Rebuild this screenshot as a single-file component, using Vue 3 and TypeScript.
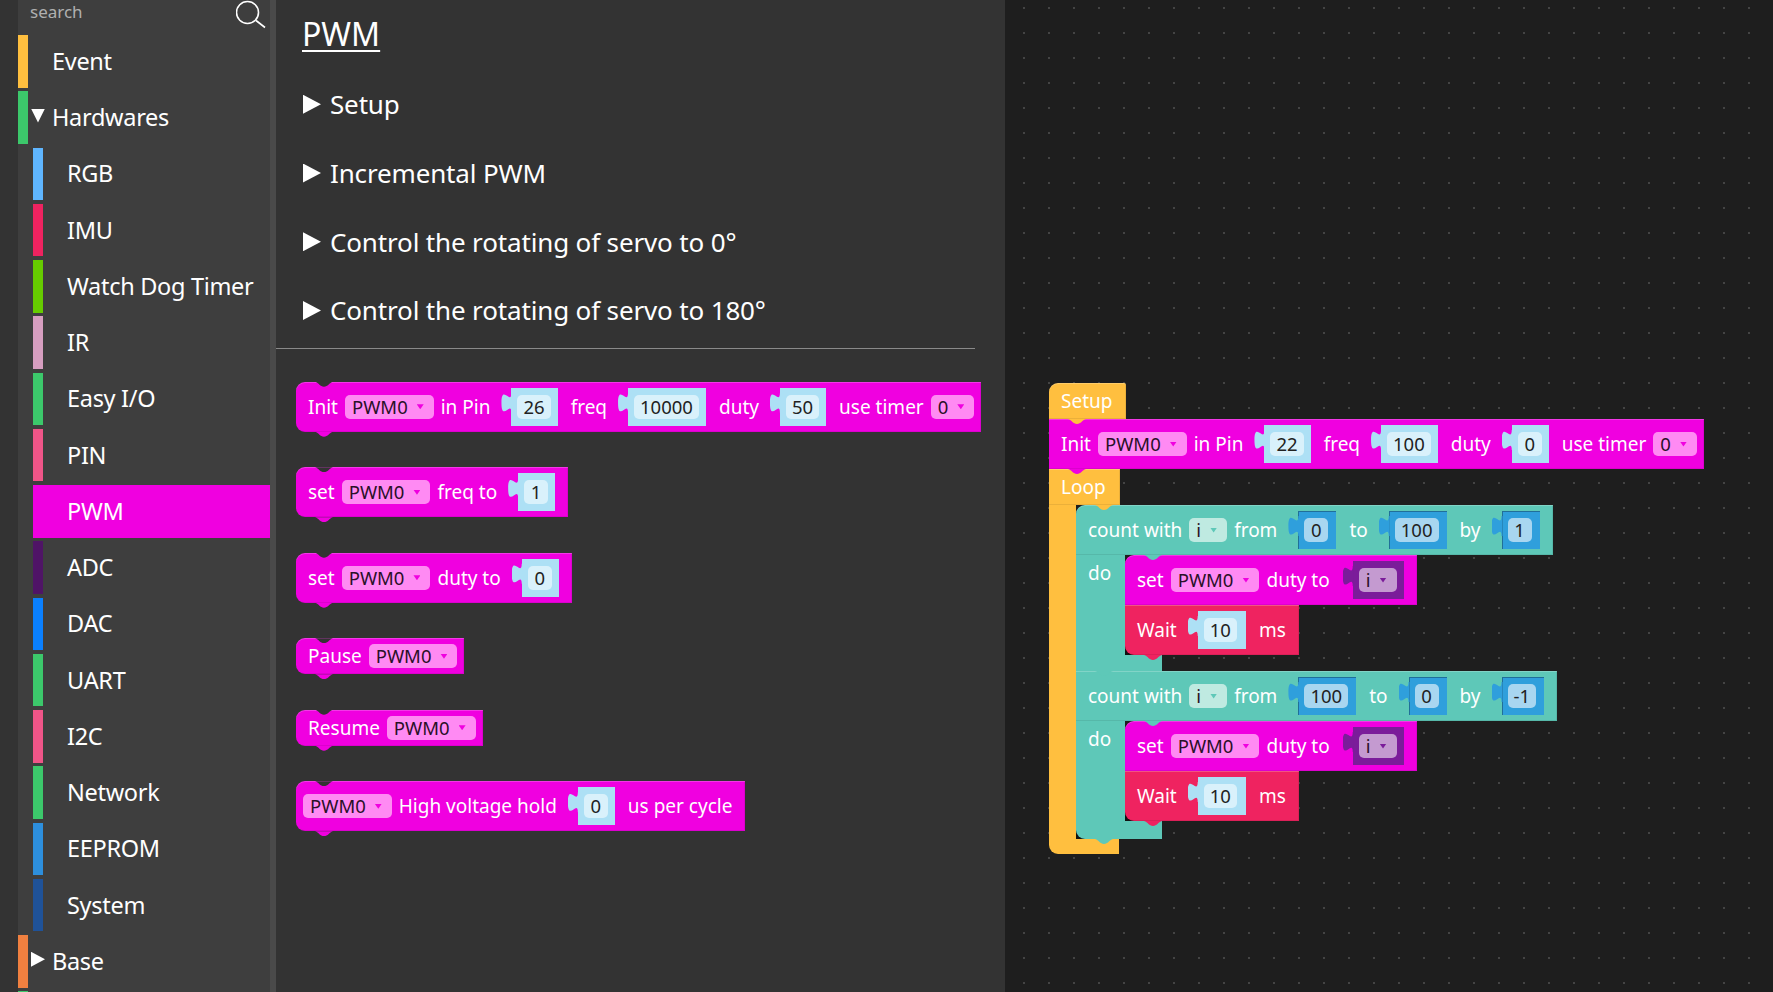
<script setup lang="ts">
type Part = { kind: "txt" | "dd" | "num" | "var"; v: string; tone?: string };

const t = (v: string): Part => ({ kind: "txt", v });
const dd = (v: string): Part => ({ kind: "dd", v });
const num = (v: string, tone = ""): Part => ({ kind: "num", v, tone });
const iVar = (): Part => ({ kind: "var", v: "i", tone: "purple" });

const toolbox = [
  { label: "Event", color: "#ffbf3f", sub: false },
  { label: "Hardwares", color: "#3cc86b", sub: false, caret: "down" },
  { label: "RGB", color: "#5fb6ff", sub: true },
  { label: "IMU", color: "#ef2360", sub: true },
  { label: "Watch Dog Timer", color: "#66cc00", sub: true },
  { label: "IR", color: "#d69ec0", sub: true },
  { label: "Easy I/O", color: "#3cc86b", sub: true },
  { label: "PIN", color: "#ef5588", sub: true },
  { label: "PWM", color: "#f000e0", sub: true, active: true },
  { label: "ADC", color: "#4f1466", sub: true },
  { label: "DAC", color: "#0a80ff", sub: true },
  { label: "UART", color: "#3cc86b", sub: true },
  { label: "I2C", color: "#ef5588", sub: true },
  { label: "Network", color: "#3cc86b", sub: true },
  { label: "EEPROM", color: "#2d8fdd", sub: true },
  { label: "System", color: "#1f5298", sub: true },
  { label: "Base", color: "#f08040", sub: false, caret: "right" },
  { label: "", color: "#3cc86b", sub: false },
];

const examples = [
  "Setup",
  "Incremental PWM",
  "Control the rotating of servo to 0°",
  "Control the rotating of servo to 180°",
];

const flyout: Part[][] = [
  [t("Init"), dd("PWM0"), t("in Pin"), num("26"), t("freq"), num("10000"), t("duty"), num("50"), t("use timer"), dd("0")],
  [t("set"), dd("PWM0"), t("freq to"), num("1")],
  [t("set"), dd("PWM0"), t("duty to"), num("0")],
  [t("Pause"), dd("PWM0")],
  [t("Resume"), dd("PWM0")],
  [dd("PWM0"), t("High voltage hold"), num("0"), t("us per cycle")],
];

const initRow = [t("Init"), dd("PWM0"), t("in Pin"), num("22"), t("freq"), num("100"), t("duty"), num("0"), t("use timer"), dd("0")];

const body = [
  { cls: "mag notch rt", parts: [t("set"), dd("PWM0"), t("duty to"), iVar()] },
  { cls: "red rb bump", parts: [t("Wait"), num("10"), t("ms")] },
];

const loops = [
  {
    cls: "notch rt",
    head: [t("count with"), dd("i"), t("from"), num("0", "blue"), t("to"), num("100", "blue"), t("by"), num("1", "blue")],
  },
  {
    cls: "",
    head: [t("count with"), dd("i"), t("from"), num("100", "blue"), t("to"), num("0", "blue"), t("by"), num("-1", "blue")],
  },
];
</script>

<template>
  <div class="app">
    <aside class="toolbox">
      <div class="search">
        <span class="search-text">search</span>
        <svg class="search-icon" width="30" height="30" viewBox="0 0 30 30" fill="none" stroke="#fff" stroke-width="1.6">
          <circle cx="11.5" cy="12.5" r="11" />
          <path d="M20 20.5 29 27.5" />
        </svg>
      </div>
      <div
        v-for="item in toolbox"
        :key="item.label"
        class="cat"
        :class="{ sub: item.sub, active: item.active }"
      >
        <span class="cat-bar" :style="{ background: item.color }"></span>
        <span class="cat-slot"><i v-if="item.caret" class="caret" :class="item.caret"></i></span>
        <span class="cat-label">{{ item.label }}</span>
      </div>
    </aside>
    <div class="scrollbar"></div>

    <main class="flyout">
      <h1 class="title">PWM</h1>
      <ul class="examples">
        <li v-for="ex in examples" :key="ex" class="example"><i class="caret right"></i>{{ ex }}</li>
      </ul>
      <hr class="rule" />
      <div class="flyout-blocks">
        <div v-for="(row, n) in flyout" :key="n" class="row mag notch bump rt rb">
          <template v-for="(p, i) in row" :key="i">
            <span v-if="p.kind === 'txt'" class="txt">{{ p.v }}</span>
            <span v-else-if="p.kind === 'dd'" class="dd">{{ p.v }}<i class="arr"></i></span>
            <span v-else class="sock" :class="p.tone"><span class="val">{{ p.v }}</span></span>
          </template>
        </div>
      </div>
    </main>

    <section class="workspace">
      <div class="program">
        <div class="row gold hat bump"><span class="txt">Setup</span></div>
        <div class="row mag bump">
          <template v-for="(p, i) in initRow" :key="i">
            <span v-if="p.kind === 'txt'" class="txt">{{ p.v }}</span>
            <span v-else-if="p.kind === 'dd'" class="dd">{{ p.v }}<i class="arr"></i></span>
            <span v-else class="sock" :class="p.tone"><span class="val">{{ p.v }}</span></span>
          </template>
        </div>
        <div class="row gold loop-head"><span class="txt">Loop</span></div>
        <div class="c-body">
          <div class="gold-arm"></div>
          <div class="count-stack">
            <div v-for="(loop, n) in loops" :key="n" class="count">
              <div class="row teal" :class="loop.cls">
                <template v-for="(p, i) in loop.head" :key="i">
                  <span v-if="p.kind === 'txt'" class="txt">{{ p.v }}</span>
                  <span v-else-if="p.kind === 'dd'" class="dd">{{ p.v }}<i class="arr"></i></span>
                  <span v-else class="sock" :class="p.tone"><span class="val">{{ p.v }}</span></span>
                </template>
              </div>
              <div class="c-body">
                <div class="teal-arm"><span class="txt">do</span></div>
                <div class="inner-stack">
                  <div v-for="(b, k) in body" :key="k" class="row" :class="b.cls">
                    <template v-for="(p, i) in b.parts" :key="i">
                      <span v-if="p.kind === 'txt'" class="txt">{{ p.v }}</span>
                      <span v-else-if="p.kind === 'dd'" class="dd">{{ p.v }}<i class="arr"></i></span>
                      <span v-else-if="p.kind === 'var'" class="sock purple"><span class="dd">{{ p.v }}<i class="arr"></i></span></span>
                      <span v-else class="sock" :class="p.tone"><span class="val">{{ p.v }}</span></span>
                    </template>
                  </div>
                </div>
              </div>
              <div class="teal-foot bump"></div>
            </div>
          </div>
        </div>
        <div class="gold-foot"></div>
      </div>
    </section>
  </div>
</template>

<style scoped>
.app {
  display: flex;
  width: 1773px;
  height: 992px;
  overflow: hidden;
  background: #333;
  color: #fff;
  font-family: "Noto Sans", "Open Sans", sans-serif;
  padding-left: 18px;
  box-sizing: border-box;
}

/* toolbox */
.toolbox {
  width: 252px;
  flex: none;
  background: #3e3e3e;
  display: flex;
  flex-direction: column;
  gap: 3.75px;
}
.search {
  height: 31.25px;
  flex: none;
  position: relative;
  padding-left: 12px;
}
.search-text {
  font-size: 17px;
  line-height: 24px;
  color: #b0b0b0;
}
.search-icon {
  position: absolute;
  right: 4px;
  top: 0;
}
.cat {
  display: flex;
  align-items: center;
  height: 52.5px;
  flex: none;
}
.cat.sub {
  margin-left: 15px;
}
.cat.active {
  background: #f000e0;
}
.cat-bar {
  width: 10px;
  height: 100%;
}
.cat-slot {
  width: 24px;
  display: flex;
  padding-left: 3px;
  box-sizing: border-box;
  margin-top: -4px;
}
.cat-label {
  font-size: 23.5px;
  letter-spacing: -0.3px;
  margin-top: -1px;
}
.caret {
  display: block;
  background: #fff;
  flex: none;
}
.caret.down {
  width: 14px;
  height: 14px;
  clip-path: polygon(0 0, 100% 0, 50% 100%);
}
.caret.right {
  width: 14px;
  height: 15px;
  clip-path: polygon(0 0, 100% 50%, 0 100%);
}
.scrollbar {
  width: 6px;
  flex: none;
  background: #4a4a4a;
}

/* flyout */
.flyout {
  width: 729px;
  flex: none;
}
.title {
  margin: 0;
  padding: 12px 0 0 26px;
  font-size: 32px;
  line-height: 44px;
  font-weight: 400;
  text-decoration: underline;
  text-underline-offset: 4px;
  text-decoration-thickness: 1.5px;
}
.examples {
  list-style: none;
  margin: 0;
  padding: 14px 0 0 27px;
}
.example {
  height: 68.7px;
  display: flex;
  align-items: center;
  font-size: 26px;
  letter-spacing: -0.15px;
}
.example .caret {
  width: 18px;
  height: 19px;
  margin-right: 9px;
}
.rule {
  width: 699px;
  margin: 3px 0 0;
  border: 0;
  border-top: 1.5px solid #8a8a8a;
}
.flyout-blocks {
  display: flex;
  flex-direction: column;
  align-items: flex-start;
  gap: 35.5px;
  padding: 33px 0 0 20px;
}

/* blocks */
.row {
  --notch: #333;
  position: relative;
  display: flex;
  align-items: center;
  gap: 7px;
  width: fit-content;
  padding: 6px 7px;
  background: var(--c);
  box-shadow: inset 0 1px rgba(255, 255, 255, 0.22), inset -1px -1px rgba(0, 0, 0, 0.08);
  font-size: 19px;
  line-height: 24px;
}
.mag {
  --c: #f000e0;
  --dd: #ff8af3;
  --arr: #f000e0;
}
.teal {
  --c: #5ec8b8;
  --dd: #bfeae1;
  --arr: #5ec8b8;
  --notch: #ffbf3f;
}
.red {
  --c: #ef2360;
}
.gold {
  --c: #ffbf3f;
}
.inner-stack .mag {
  --notch: #5ec8b8;
}
.rt {
  border-top-left-radius: 9px;
}
.rb {
  border-bottom-left-radius: 9px;
}
.notch::before,
.bump::after {
  content: "";
  position: absolute;
  left: 19px;
  width: 18px;
  height: 5px;
}
.notch::before {
  top: 0;
  background: var(--notch);
  clip-path: path("M0 0C4 1 5 5 9 5C13 5 14 1 18 0Z");
}
.bump::after {
  bottom: -5px;
  z-index: 2;
  background: var(--c);
  clip-path: path("M0 0C4 1 5 5 9 5C13 5 14 1 18 0Z");
}
.txt {
  white-space: nowrap;
}
.txt:first-child {
  margin-left: 5px;
}
.txt:last-child {
  margin-right: 6px;
}
.dd {
  display: flex;
  align-items: center;
  height: 24px;
  padding: 0 10px 0 7px;
  border-radius: 5px;
  background: var(--dd);
  color: #2a1028;
  font-size: 18.5px;
  white-space: nowrap;
}
.arr {
  width: 7px;
  height: 5px;
  margin-left: 9px;
  background: var(--arr);
  clip-path: polygon(0 0, 100% 0, 50% 100%);
}
.sock {
  --s: #ade0f5;
  position: relative;
  display: flex;
  align-items: center;
  height: 38px;
  margin: 0 6px 0 14px;
  padding: 0 7px 0 6px;
  box-sizing: border-box;
  background: var(--s);
}
.sock::before {
  content: "";
  position: absolute;
  left: -10px;
  top: 0;
  width: 11px;
  height: 26px;
  background: var(--s);
  clip-path: path("M11 5L10 5C10 18 0 -4 0 15C0 35 10 12 10 25L11 25Z");
}
.val {
  display: flex;
  align-items: center;
  justify-content: center;
  min-width: 24px;
  box-sizing: border-box;
  height: 24px;
  padding: 0 6px;
  border-radius: 5px;
  background: #d9f1fb;
  color: #222;
  font-size: 18.5px;
}
.red .sock {
  padding-right: 9px;
}
.teal .sock {
  padding-right: 8px;
}
.sock.blue {
  --s: #2f9fdc;
  box-shadow: inset 1px 1px rgba(0, 0, 0, 0.3);
}
.sock.blue .val {
  background: #a8d6f0;
}
.sock.purple {
  --s: #7b1c9a;
  --dd: #c49ad0;
  --arr: #7b1c9a;
  margin-left: 16px;
}

/* workspace canvas */
.workspace {
  flex: 1;
  position: relative;
  background-color: #1e1e1e;
  background-image: radial-gradient(circle at 1px 1px, #444 0.8px, transparent 1px);
  background-size: 25px 25px;
  background-position: 18px 7px;
}
.program {
  position: absolute;
  left: 44px;
  top: 383px;
}
.hat {
  min-width: 63px;
  border-radius: 9px 2px 0 0;
}
.loop-head {
  min-width: 57px;
}
.c-body {
  display: flex;
}
.gold-arm {
  width: 27px;
  background: #ffbf3f;
  flex: none;
}
.count-stack {
  display: flex;
  flex-direction: column;
  background: linear-gradient(#111, #111) left bottom / 9px 9px no-repeat;
}
.teal-arm {
  width: 49px;
  flex: none;
  box-sizing: border-box;
  padding: 6px 0 0 12px;
  background: #5ec8b8;
  font-size: 19px;
  line-height: 24px;
}
.teal-arm .txt {
  margin: 0;
}
.inner-stack {
  display: flex;
  flex-direction: column;
  background: linear-gradient(#111, #111) left bottom / 9px 9px no-repeat;
}
.teal-foot {
  --c: #5ec8b8;
  position: relative;
  width: 86px;
  height: 16px;
  background: var(--c);
}
.count:last-child .teal-foot {
  height: 18px;
  border-bottom-left-radius: 9px;
}
.gold-foot {
  width: 70px;
  height: 15px;
  background: #ffbf3f;
  border-bottom-left-radius: 9px;
}
</style>

<style>
html,
body {
  margin: 0;
  background: #333;
  overflow: hidden;
}
</style>
